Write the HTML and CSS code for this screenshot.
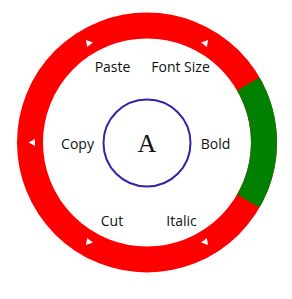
FILE: index.html
```html
<!DOCTYPE html>
<html lang="en">
<head>
    <meta charset="UTF-8">
    <title>Radial Menu</title>
    <link rel="stylesheet" href="styles.css">
</head>
<body>
    <div class="menu">
        <svg class="ring" width="292" height="299" viewBox="0 0 292 299">
            <!-- outer band -->
            <circle cx="147" cy="142.5" r="117" fill="none" stroke="#ff0000" stroke-width="26"/>
            <!-- selected segment -->
            <path d="M 248.3 84 A 117 117 0 0 1 248.3 201" fill="none" stroke="#008000" stroke-width="26"/>
            <!-- arrows -->
            <polygon class="arrow" points="-3,-3.5 3.5,0 -3,3.5" transform="translate(89.5 43) rotate(-10)"/>
            <polygon class="arrow" points="3,-3.5 -3.5,0 3,3.5" transform="translate(204.5 43) rotate(10)"/>
            <polygon class="arrow" points="3,-3.5 -3.5,0 3,3.5" transform="translate(32 142.5)"/>
            <polygon class="arrow" points="-3,-3.5 3.5,0 -3,3.5" transform="translate(89.5 242) rotate(10)"/>
            <polygon class="arrow" points="3,-3.5 -3.5,0 3,3.5" transform="translate(204.5 242) rotate(-10)"/>
            <!-- center button -->
            <circle cx="147" cy="143" r="43.5" fill="#ffffff" stroke="#3b1ea8" stroke-width="2"/>
        </svg>
        <span class="center-letter">A</span>
        <span class="item" style="left:112.5px; top:67px">Paste</span>
        <span class="item" style="left:180.5px; top:67px">Font Size</span>
        <span class="item" style="left:77.5px; top:144px">Copy</span>
        <span class="item" style="left:215.5px; top:144px">Bold</span>
        <span class="item" style="left:112px; top:221px">Cut</span>
        <span class="item" style="left:181.5px; top:221px">Italic</span>
    </div>
</body>
</html>
```

FILE: styles.css
```css
* {
    box-sizing: border-box;
    margin: 0;
    padding: 0;
}
body {
    background: #ffffff;
    font-family: 'Open Sans', 'Noto Sans', sans-serif;
}
.menu {
    position: relative;
    width: 292px;
    height: 299px;
}
.ring {
    display: block;
}
.arrow {
    fill: #ffffff;
}
.item {
    position: absolute;
    transform: translate(-50%, -50%);
    font-size: 14px;
    color: #111111;
    white-space: nowrap;
    line-height: 1;
}
.center-letter {
    position: absolute;
    left: 147px;
    top: 144px;
    transform: translate(-50%, -50%);
    font-family: 'Liberation Serif', serif;
    font-size: 26px;
    line-height: 1;
    color: #111111;
}
```
